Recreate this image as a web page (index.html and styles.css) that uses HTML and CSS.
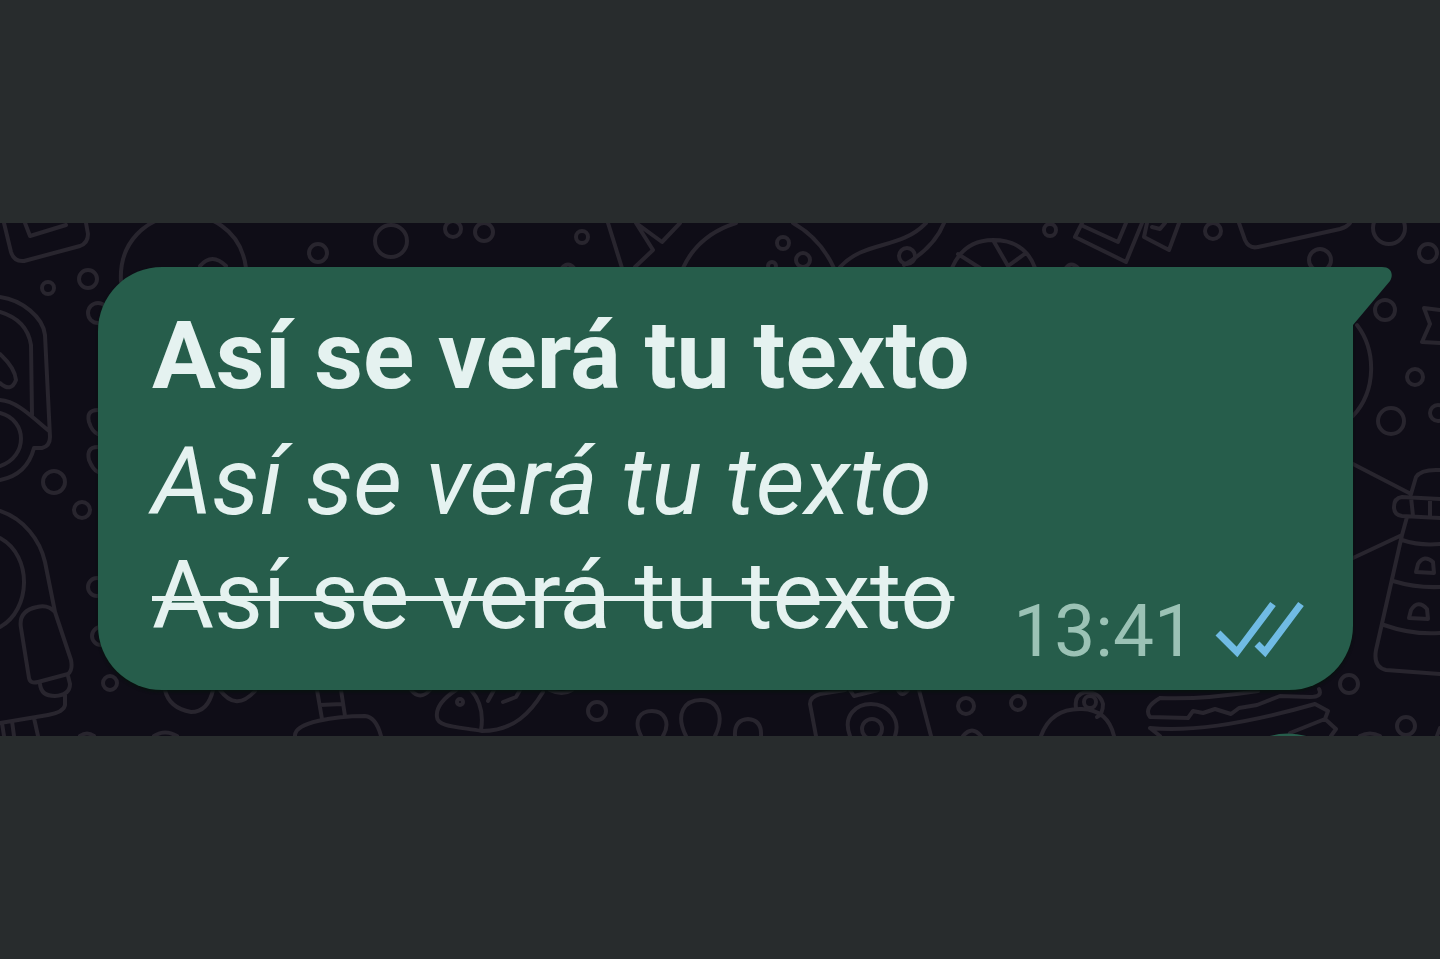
FILE: index.html
```html
<!DOCTYPE html>
<html lang="es">
<head>
    <meta charset="UTF-8">
    <meta name="viewport" content="width=device-width, initial-scale=1.0">
    <title>Así se verá tu texto</title>
    <link rel="stylesheet" href="styles.css">
</head>
<body>
    <main class="chat">
        <!-- doodle wallpaper -->
        <svg class="wallpaper" viewBox="0 223 1440 513" preserveAspectRatio="xMidYMid slice" aria-hidden="true">
            <!-- top left -->
            <path d="M4 223L11 252Q14 262 24 261L80 246Q88 243 88 234L86 223M25 223L30 236L66 225"/>
            <path d="M121 282C116 200 236 190 246 268M200 266Q212 252 226 266"/>
            <circle cx="318" cy="253" r="9"/>
            <circle cx="88" cy="279" r="9"/>
            <circle cx="48" cy="288" r="6"/>
            <circle cx="98" cy="313" r="10"/>
            <!-- top -->
            <circle cx="391" cy="241" r="16"/>
            <circle cx="453" cy="229" r="8"/>
            <circle cx="484" cy="232" r="9"/>
            <circle cx="582" cy="237" r="6"/>
            <path d="M562 268Q568 261 574 268M608 223L622 268M636 223L653 250L635 267M636 223L662 242L680 223"/>
            <path d="M683 268Q698 235 736 223M793 223Q820 238 834 268M840 267C865 240 900 250 926 223M944 223Q934 248 904 265"/>
            <circle cx="783" cy="243" r="6"/>
            <circle cx="803" cy="260" r="7"/>
            <circle cx="772" cy="266" r="4"/>
            <circle cx="907" cy="256" r="8"/>
            <path d="M952 268Q964 240 993 240Q1025 240 1035 268M958 254L980 268M993 240L1008 266L1026 253"/>
            <circle cx="1050" cy="230" r="6"/>
            <path d="M1082 223L1075 237L1126 262L1142 223M1083 226L1118 242L1126 223M1147 223L1144 237L1169 250L1179 223M1152 227L1160 229L1165 223M1066 268Q1071 261 1078 268"/>
            <circle cx="1213" cy="231" r="8"/>
            <path d="M1239 223L1245 240Q1249 249 1258 247L1340 229Q1347 227 1350 223"/>
            <circle cx="1320" cy="260" r="11"/>
            <circle cx="1389" cy="228" r="16"/>
            <circle cx="1428" cy="253" r="9"/>
            <!-- left side -->
            <path d="M0 297C22 300 43 317 45 335L50 437Q50 446 42 448L34 448C29 467 16 477 0 480M0 312Q27 320 31 345L32 415M0 354Q15 368 16 380Q11 393 0 383M0 400C17 401 32 417 49 431M0 413C28 420 28 457 0 466"/>
            <path d="M98 410Q86 410 89 422Q92 432 98 434M98 447Q86 447 89 460Q93 470 98 472"/>
            <circle cx="54" cy="482" r="11"/>
            <circle cx="82" cy="510" r="8"/>
            <path d="M0 511C24 519 40 540 45 562L55 612M0 538C33 556 31 610 0 627M55 612Q48 604 37 607Q18 611 21 628L29 678Q30 684 38 682L68 674Q73 670 71 660L55 612M40 684Q41 696 55 696Q70 695 70 684L68 676M65 695L65 705Q64 712 48 715L0 723M12 721L14 736M2 723L4 736M34 718L38 736"/>
            <circle cx="97" cy="587" r="9"/>
            <circle cx="101" cy="636" r="9"/>
            <circle cx="110" cy="683" r="7"/>
            <!-- bottom -->
            <path d="M165 690Q169 708 191 712Q208 712 213 690M220 690Q236 712 255 691M80 736Q87 731 94 736M154 736Q165 729 177 736"/>
            <path d="M317 690L322 719M341 690L345 716M320 705L342 704M295 736C294 722 336 716 365 716Q376 717 381 736"/>
            <path d="M411 690Q420 701 430 690M456 690Q435 704 437 717C437 727 460 727 482 731C514 731 531 712 543 692M471 690Q485 706 481 730M494 690L488 701M520 690L516 697L503 702M550 690Q562 696 572 690"/>
            <circle cx="460" cy="702" r="3"/>
            <circle cx="597" cy="711" r="9"/>
            <path d="M641 736C633 720 640 711 652 711C664 711 671 722 663 736M686 736C675 714 684 700 701 700C718 700 725 716 715 736M735 736Q734 720 748 719Q762 720 761 736"/>
            <path d="M816 736L810 704Q810 697 820 694L845 690M850 690L854 696L878 690M898 690Q902 698 908 690M919 690L931 736"/>
            <path d="M850 736C842 715 857 704 871 704C888 704 901 719 895 736"/>
            <circle cx="872" cy="729" r="10"/>
            <circle cx="966" cy="706" r="8"/>
            <circle cx="1018" cy="703" r="7"/>
            <path d="M963 736Q972 725 981 736M1041 736Q1051 708 1082 709Q1108 710 1114 736M1076 708Q1074 695 1085 692Q1100 692 1103 704Q1103 714 1097 717"/>
            <circle cx="1090" cy="702" r="6"/>
            <path d="M1160 698Q1200 700 1258 691M1319 689Q1323 697 1310 697L1280 696L1257 705L1239 708L1231 714L1215 709L1203 713L1193 711L1188 718L1150 717Q1143 708 1160 698M1150 728Q1210 734 1315 704L1328 711L1325 719L1290 733M1325 719L1336 729L1331 736M1150 728L1160 736"/>
            <path class="next-bubble" d="M1270 738Q1288 733 1306 738"/>
            <circle cx="1349" cy="684" r="9"/>
            <circle cx="1406" cy="726" r="9"/>
            <path d="M1360 736Q1370 731 1380 736M1437 736L1440 728"/>
            <!-- right side -->
            <circle cx="1385" cy="310" r="10"/>
            <path d="M1357 325C1376 350 1377 390 1353 416M1440 310L1424 308L1430 324L1422 342L1440 343"/>
            <circle cx="1415" cy="377" r="8"/>
            <circle cx="1391" cy="421" r="13"/>
            <circle cx="1438" cy="413" r="8"/>
            <!-- lighthouse -->
            <path d="M1353 464L1411 494L1416 477Q1421 469 1440 470M1440 499L1402 497Q1394 498 1394 507Q1394 515 1402 516L1440 518M1411 497L1413 516M1430 499L1430 517M1407 517L1402 535L1353 558M1402 535L1376 650Q1373 667 1386 670L1440 674M1402 540Q1420 546 1440 544M1393 581Q1416 588 1440 587M1384 625Q1412 635 1440 633"/>
            <path d="M1416 572L1418 564Q1424 554 1433 562L1434 573ZM1409 618L1411 610Q1418 599 1427 609L1428 619Z"/>
        </svg>

        <article class="bubble">
            <svg class="tail" viewBox="0 0 60 60" aria-hidden="true">
                <path d="M0 0H50C59 0 62 7 58 14L21 58V60H0Z"/>
            </svg>
            <div class="message">
                <p class="line"><strong>Así se verá tu texto</strong></p>
                <p class="line line-italic"><em>Así se verá tu texto</em></p>
                <p class="line"><s>Así se verá tu texto</s></p>
            </div>
            <div class="meta">
                <time datetime="13:41">13:41</time>
                <svg class="ticks" viewBox="0 0 90 60" role="img" aria-label="Leído">
                    <path d="M3 32L22 51L58 3M42 43L50 51L86 3"/>
                </svg>
            </div>
        </article>
    </main>
</body>
</html>
```
FILE: styles.css
```css
:root {
    --page: #282c2d;
    --chat: #0f0d17;
    --doodle: #28252e;
    --bubble: #265d4b;
    --text: #e5f2f0;
    --time: #9bc2b5;
    --ticks: #70bbe4;
}

* {
    margin: 0;
    padding: 0;
    box-sizing: border-box;
}

body {
    background: var(--page);
    min-height: 100vh;
    display: flex;
    flex-direction: column;
    justify-content: center;
    font-family: Roboto, "Liberation Sans", sans-serif;
}

.chat {
    position: relative;
    background: var(--chat);
    padding: 44px 87px 46px 98px;
    overflow: hidden;
}

/* background drawing */
.wallpaper {
    position: absolute;
    top: 0;
    left: 0;
    width: 100%;
    height: 100%;
    fill: none;
    stroke: var(--doodle);
    stroke-width: 4;
    stroke-linecap: round;
    stroke-linejoin: round;
}

.wallpaper .next-bubble {
    stroke: var(--bubble);
}

.bubble {
    position: relative;
    display: flex;
    align-items: flex-end;
    justify-content: space-between;
    padding: 32px 48px 22px 54px;
    background: var(--bubble);
    border-radius: 64px 0 64px 64px;
    box-shadow: 0 2px 3px #08120f;
}

.tail {
    position: absolute;
    top: 0;
    right: -39px;
    width: 60px;
    height: 60px;
    fill: var(--bubble);
}

.message {
    padding-bottom: 15px;
    color: var(--text);
    font-size: 95px;
    line-height: 114px;
    white-space: nowrap;
}

.line-italic {
    margin-top: 12px;
}

.line s {
    text-decoration-thickness: 5px;
}

.meta {
    display: flex;
    align-items: center;
    gap: 20px;
    color: var(--time);
    font-size: 73px;
    line-height: 74px;
}

.ticks {
    width: 90px;
    height: 60px;
    fill: none;
    stroke: var(--ticks);
    stroke-width: 7;
}
```
